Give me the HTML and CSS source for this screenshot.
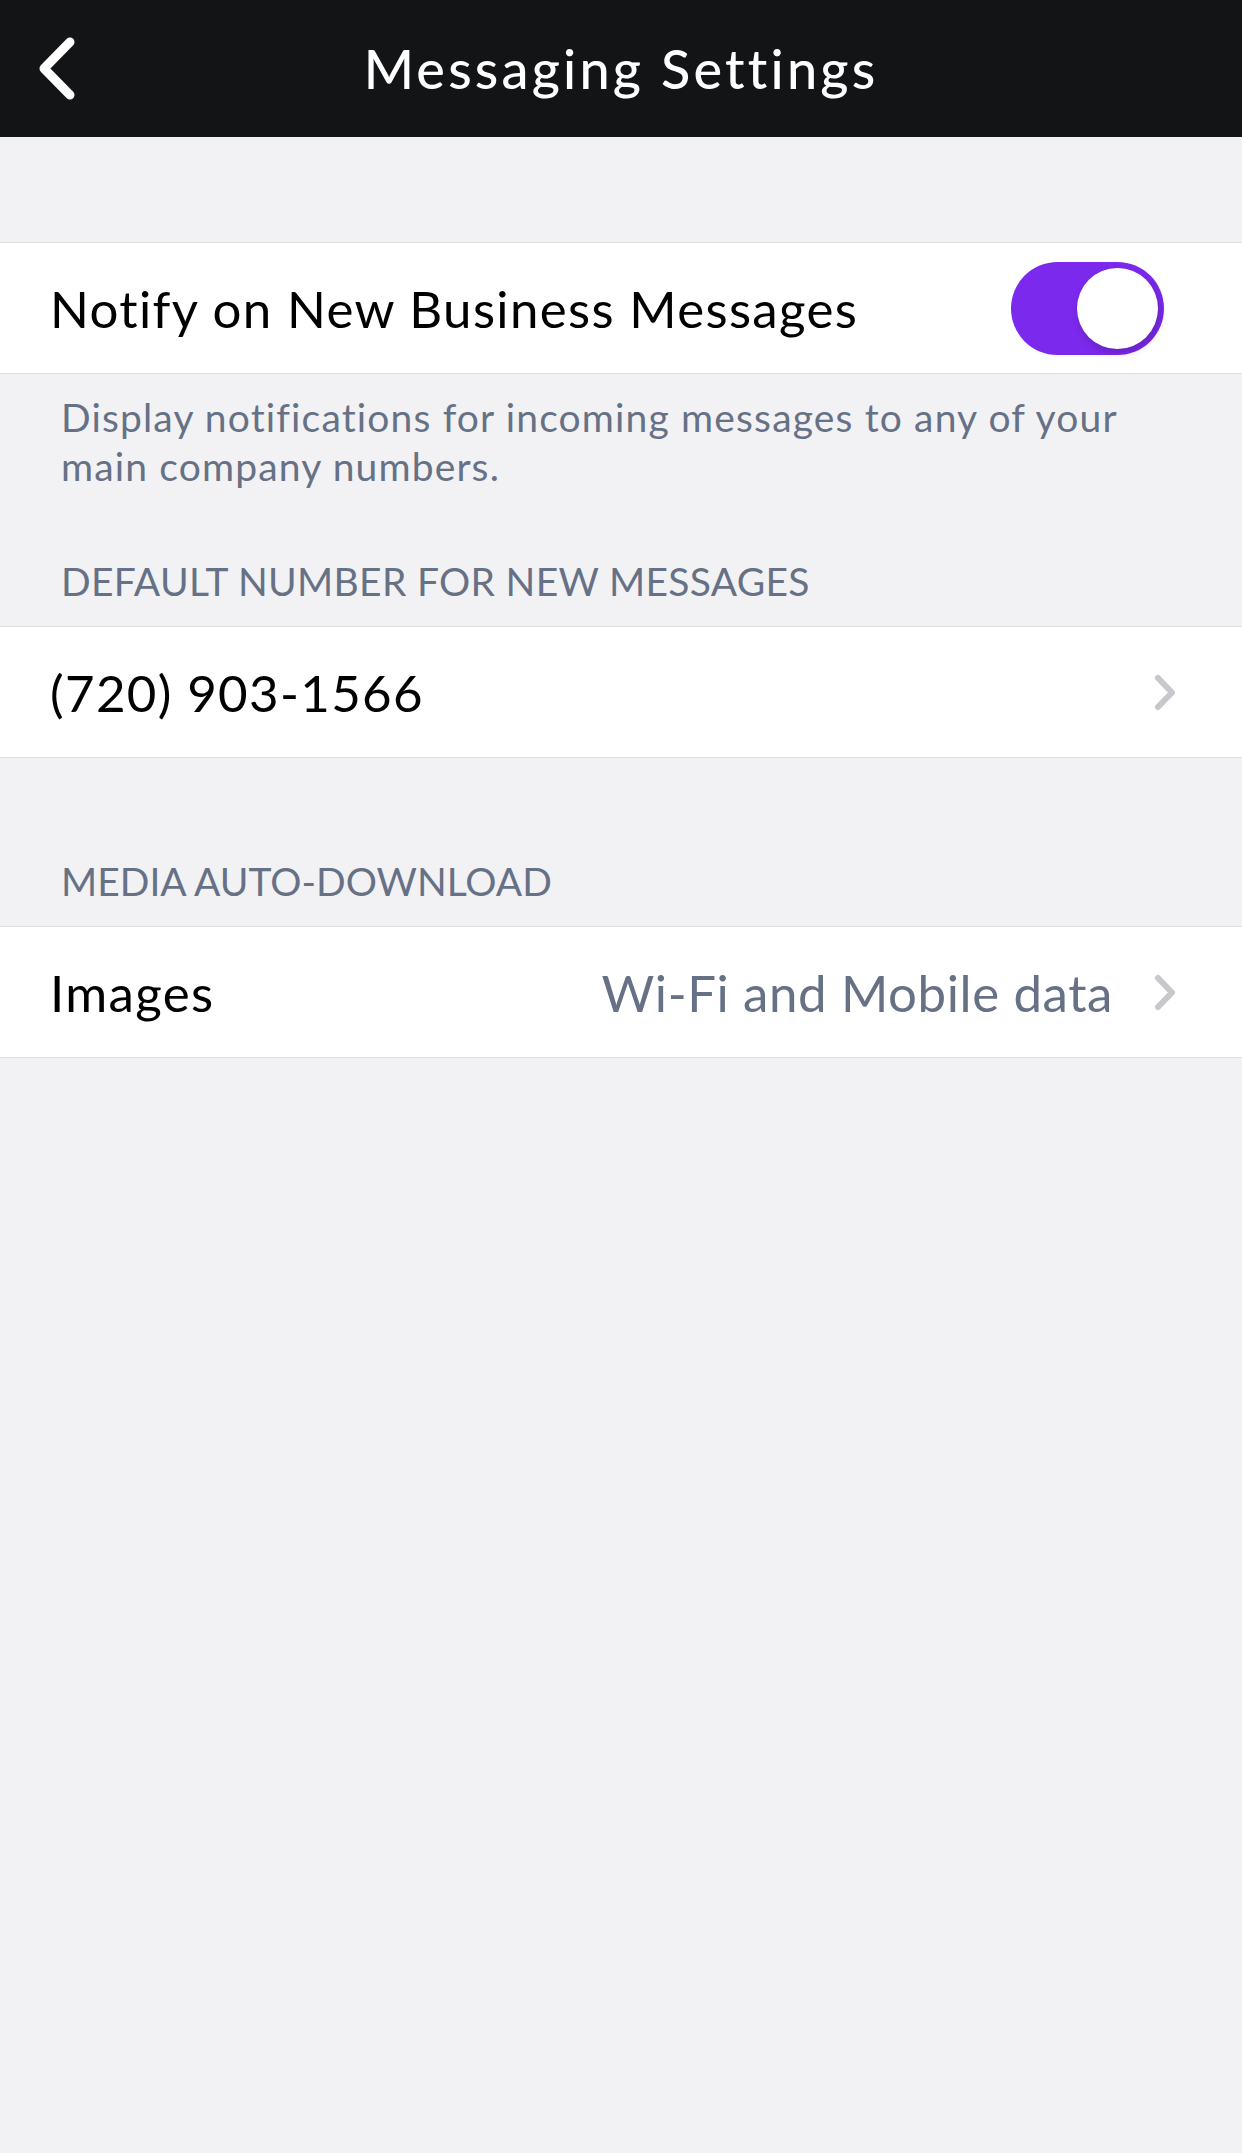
FILE: index.html
```html
<!DOCTYPE html>
<html lang="en">
<head>
  <meta charset="UTF-8">
  <meta name="viewport" content="width=device-width, initial-scale=1.0">
  <title>Messaging Settings</title>
  <link rel="stylesheet" href="styles.css">
</head>
<body>
  <div class="navbar">
    <div class="nav-left">
      <svg class="back" width="37" height="63" viewBox="0 0 37 63">
        <path d="M32 5 L6 31.5 L32 58" fill="none" stroke="#fff" stroke-width="9" stroke-linecap="round" stroke-linejoin="round"/>
      </svg>
    </div>
    <h1 class="title">Messaging Settings</h1>
    <div class="nav-right"></div>
  </div>

  <div class="group first">
    <div class="row">
      <span class="label">Notify on New Business Messages</span>
      <div class="switch on"><div class="knob"></div></div>
    </div>
  </div>
  <p class="footnote">Display notifications for incoming messages to any of your main company numbers.</p>

  <h2 class="section">DEFAULT NUMBER FOR NEW MESSAGES</h2>
  <div class="group">
    <div class="row">
      <span class="label">(720) 903-1566</span>
      <svg class="chevron" width="22" height="37" viewBox="0 0 22 37">
        <path d="M4 4 L18 18.5 L4 33" fill="none" stroke="#c7c7cc" stroke-width="6" stroke-linecap="round" stroke-linejoin="round"/>
      </svg>
    </div>
  </div>

  <h2 class="section spaced">MEDIA AUTO-DOWNLOAD</h2>
  <div class="group">
    <div class="row">
      <span class="label">Images</span>
      <span class="value">Wi-Fi and Mobile data</span>
      <svg class="chevron" width="22" height="37" viewBox="0 0 22 37">
        <path d="M4 4 L18 18.5 L4 33" fill="none" stroke="#c7c7cc" stroke-width="6" stroke-linecap="round" stroke-linejoin="round"/>
      </svg>
    </div>
  </div>
</body>
</html>
```

FILE: styles.css
```css
body { margin: 0; background: #f2f2f4; font-family: Lato, "Open Sans", sans-serif; color: #000; min-height: 2153px; }

.navbar { height: 137px; background: #131416; display: grid; grid-template-columns: 1fr auto 1fr; align-items: center; }
.nav-left { padding-left: 38px; display: flex; align-items: center; }
.back { display: block; }
.title { margin: 0; color: #fff; font-size: 54px; font-weight: 500; letter-spacing: 3.2px; }

.group { background: #fff; border-top: 1px solid #dedee3; border-bottom: 1px solid #dedee3; }
.group.first { margin-top: 105px; }
.row { height: 130px; display: flex; align-items: center; padding: 0 66px 0 50px; }
.label { font-size: 51px; flex: 1; letter-spacing: 1.35px; }
.label.num { letter-spacing: 1.1px; }
.value { font-size: 51px; color: #667186; margin-right: 41px; letter-spacing: 0.6px; }
.chevron { display: block; }

.switch { width: 153px; height: 93px; border-radius: 47px; background: #7b29ec; position: relative; margin-right: 12px; }
.knob { position: absolute; top: 6px; right: 6px; width: 81px; height: 81px; border-radius: 50%; background: #fff; box-shadow: 2px 4px 8px rgba(0,0,0,0.18); }

.footnote { margin: 0; padding: 19px 60px 0 61px; font-size: 39px; line-height: 49px; color: #667186; letter-spacing: 1.15px; }
.section { margin: 0; padding: 66px 0 20px 61px; font-size: 39px; line-height: 49px; font-weight: 400; color: #667186; letter-spacing: 0.3px; }
.section.spaced { padding-top: 99px; letter-spacing: 0px; }
```
